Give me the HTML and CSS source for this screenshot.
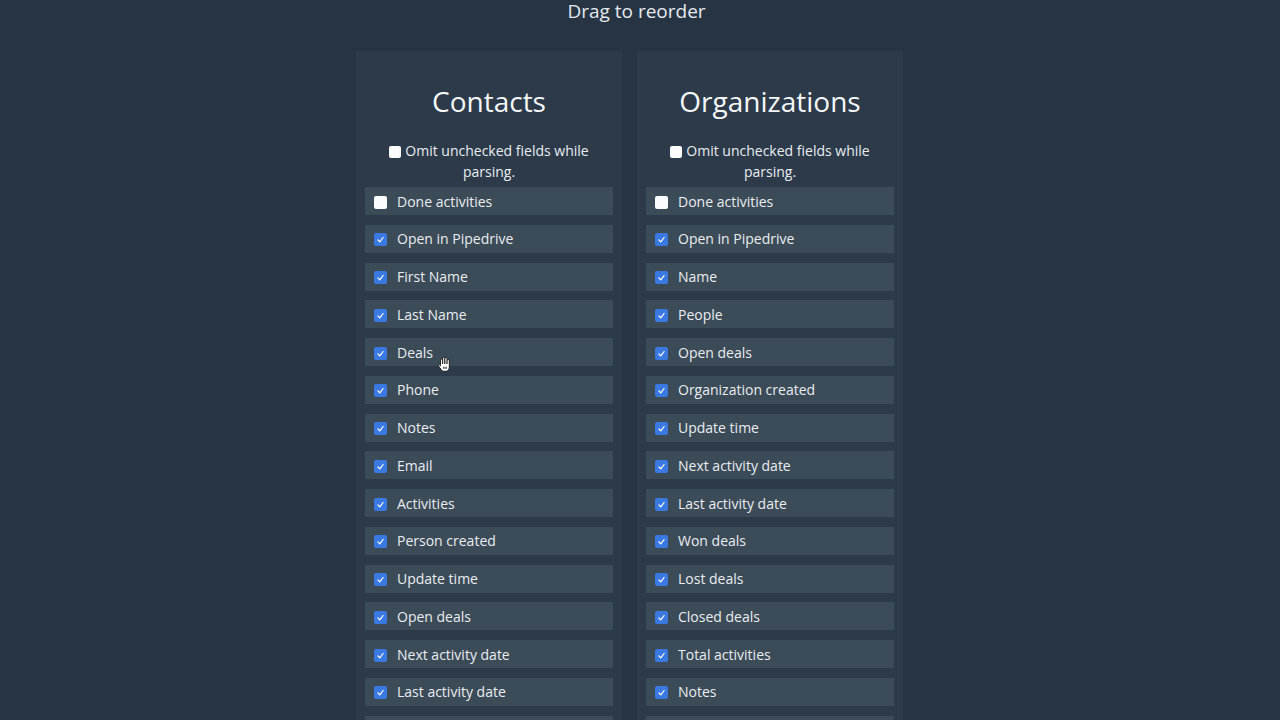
FILE: index.html
```html
<!DOCTYPE html>
<html>
<head>
<meta charset="utf-8">
<link rel="stylesheet" href="styles.css">
</head>
<body>
<div class="page">
  <div class="hint">Drag to reorder</div>
  <div class="columns">
    <section class="panel">
      <h2 class="title">Contacts</h2>
      <div class="omit"><span class="cb"></span>Omit unchecked fields while parsing.</div>
      <ul class="fields">
        <li class="field"><span class="cb"></span>Done activities</li>
        <li class="field"><span class="cb on"></span>Open in Pipedrive</li>
        <li class="field"><span class="cb on"></span>First Name</li>
        <li class="field"><span class="cb on"></span>Last Name</li>
        <li class="field"><span class="cb on"></span>Deals</li>
        <li class="field"><span class="cb on"></span>Phone</li>
        <li class="field"><span class="cb on"></span>Notes</li>
        <li class="field"><span class="cb on"></span>Email</li>
        <li class="field"><span class="cb on"></span>Activities</li>
        <li class="field"><span class="cb on"></span>Person created</li>
        <li class="field"><span class="cb on"></span>Update time</li>
        <li class="field"><span class="cb on"></span>Open deals</li>
        <li class="field"><span class="cb on"></span>Next activity date</li>
        <li class="field"><span class="cb on"></span>Last activity date</li>
        <li class="field"></li>
      </ul>
    </section>
    <section class="panel">
      <h2 class="title">Organizations</h2>
      <div class="omit"><span class="cb"></span>Omit unchecked fields while parsing.</div>
      <ul class="fields">
        <li class="field"><span class="cb"></span>Done activities</li>
        <li class="field"><span class="cb on"></span>Open in Pipedrive</li>
        <li class="field"><span class="cb on"></span>Name</li>
        <li class="field"><span class="cb on"></span>People</li>
        <li class="field"><span class="cb on"></span>Open deals</li>
        <li class="field"><span class="cb on"></span>Organization created</li>
        <li class="field"><span class="cb on"></span>Update time</li>
        <li class="field"><span class="cb on"></span>Next activity date</li>
        <li class="field"><span class="cb on"></span>Last activity date</li>
        <li class="field"><span class="cb on"></span>Won deals</li>
        <li class="field"><span class="cb on"></span>Lost deals</li>
        <li class="field"><span class="cb on"></span>Closed deals</li>
        <li class="field"><span class="cb on"></span>Total activities</li>
        <li class="field"><span class="cb on"></span>Notes</li>
        <li class="field"></li>
      </ul>
    </section>
  </div>
  <svg class="cursor" width="16" height="18" viewBox="0 0 16 18">
    <g fill="#fff" stroke="#111" stroke-width="0.9">
      <rect x="3.5" y="4" width="2.2" height="8" rx="1.1"/>
      <rect x="5.7" y="2" width="2.2" height="9" rx="1.1"/>
      <rect x="7.9" y="2.5" width="2.2" height="9" rx="1.1"/>
      <rect x="10.1" y="4.5" width="2.2" height="7" rx="1.1"/>
      <path d="M3.5 9.5H12.3V12.3C12.3 14.8 10.8 16.3 8.8 16.3H6.8C5.8 16.3 5 15.8 4.4 14.9L1.7 11.2C1.1 10.4 2.1 9.4 2.9 10.1L3.5 10.7Z" stroke-linejoin="round"/>
    </g>
    <rect x="3.9" y="9" width="8" height="1.2" fill="#fff"/>
    <path d="M6.6 13.8v-2M8 13.8v-2M9.4 13.8v-2" stroke="#111" stroke-width="0.8"/>
  </svg>
</div>
</body>
</html>
```

FILE: styles.css
```css
html, body {
  margin: 0;
  padding: 0;
  background: #263444;
  height: 100%;
  overflow: hidden;
}
.page {
  position: relative;
  font-family: "Open Sans", "Noto Sans", sans-serif;
  color: #e9edf1;
}
.hint {
  text-align: center;
  font-size: 19px;
  line-height: 22px;
  padding-right: 7px;
  color: #e6eaee;
}
.columns {
  display: flex;
  justify-content: center;
  gap: 15px;
  padding-right: 21px;
  margin-top: 29px;
}
.panel {
  width: 248px;
  padding: 0 9px 9px;
  background: #2c3a4a;
}
.title {
  margin: 31px 0 0;
  font-size: 28px;
  line-height: 38px;
  font-weight: 500;
  text-align: center;
  color: #f5f7f9;
}
.omit {
  margin-top: 20px;
  text-align: center;
  font-size: 14px;
  line-height: 21px;
  padding: 0 22px;
}
.omit .cb {
  display: inline-block;
  vertical-align: -2px;
  margin-right: 4px;
  width: 12px;
  height: 12px;
}
.fields {
  list-style: none;
  margin: 5px 0 0;
  padding: 0;
  display: flex;
  flex-direction: column;
  gap: 9.75px;
}
.field {
  height: 28px;
  background: #3c4b58;
  display: flex;
  align-items: center;
  padding-left: 9px;
  gap: 10px;
  font-size: 14px;
}
.cb {
  width: 13px;
  height: 13px;
  border-radius: 2px;
  background: #fbfcfd;
  flex: none;
  margin-top: 2px;
}
.cb.on {
  background: #3a79e2 url("data:image/svg+xml;utf8,<svg xmlns='http://www.w3.org/2000/svg' viewBox='0 0 13 13'><path d='M4 7l1.8 1.8 3.3-4.3' fill='none' stroke='white' stroke-width='1.2' stroke-linecap='round' stroke-linejoin='round'/></svg>") center / 13px 13px no-repeat;
}
.cursor {
  position: absolute;
  left: 437px;
  top: 355px;
}
```
